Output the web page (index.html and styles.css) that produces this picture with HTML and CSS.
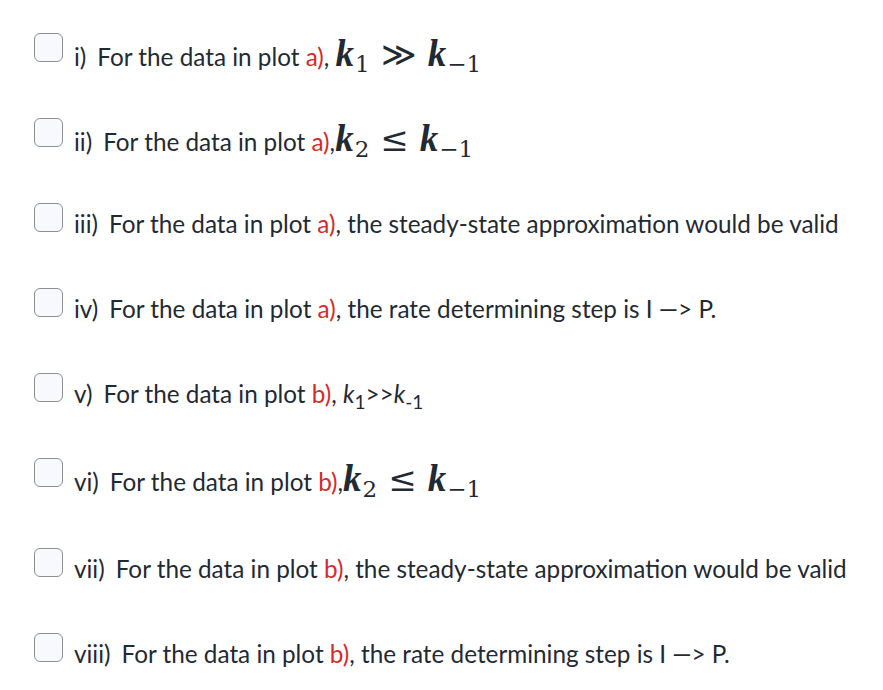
FILE: index.html
```html
<!DOCTYPE html>
<html>
<head>
<meta charset="utf-8">
<link rel="stylesheet" href="styles.css">
</head>
<body>
<div class="list">
  <div class="row"><span class="box"></span><span class="txt"><span class="num">i)</span>For the data in plot <span class="red">a)</span>, <span class="math"><i>k</i><sub>1</sub><span class="op">≫</span><i>k</i><sub>−1</sub></span></span></div>
  <div class="row"><span class="box"></span><span class="txt"><span class="num">ii)</span>For the data in plot <span class="red">a)</span>,<span class="math"><i>k</i><sub>2</sub><span class="op">≤</span><i>k</i><sub>−1</sub></span></span></div>
  <div class="row"><span class="box"></span><span class="txt"><span class="num">iii)</span>For the data in plot <span class="red">a)</span>, the steady-state approximation would be valid</span></div>
  <div class="row"><span class="box"></span><span class="txt"><span class="num">iv)</span>For the data in plot <span class="red">a)</span>, the rate determining step is I —&gt; P.</span></div>
  <div class="row"><span class="box"></span><span class="txt"><span class="num">v)</span>For the data in plot <span class="red">b)</span>, <span class="lk">k<sub>1</sub></span>&gt;&gt;<span class="lk">k<sub>-1</sub></span></span></div>
  <div class="row tall"><span class="box"></span><span class="txt"><span class="num">vi)</span>For the data in plot <span class="red">b)</span>,<span class="math"><i>k</i><sub>2</sub><span class="op">≤</span><i>k</i><sub>−1</sub></span></span></div>
  <div class="row"><span class="box"></span><span class="txt"><span class="num">vii)</span>For the data in plot <span class="red">b)</span>, the steady-state approximation would be valid</span></div>
  <div class="row"><span class="box"></span><span class="txt"><span class="num">viii)</span>For the data in plot <span class="red">b)</span>, the rate determining step is I —&gt; P.</span></div>
</div>
</body>
</html>
```
FILE: styles.css
```css
html, body {
  margin: 0;
  padding: 0;
  background: #ffffff;
}
body {
  font-family: Lato, "Open Sans", sans-serif;
  color: #1f2a33;
}
.list {
  display: flex;
  flex-direction: column;
  padding-top: 33px;
  padding-left: 34px;
}
.row {
  display: flex;
  align-items: flex-start;
  height: 85px;
}
.row.tall {
  height: 90px;
}
.box {
  flex: none;
  width: 27px;
  height: 27px;
  border: 1.5px solid #8a8f96;
  border-radius: 6px;
  background: #f7f9fc;
  margin-right: 11px;
}
.txt {
  font-size: 24.3px;
  line-height: 30px;
  margin-top: 6px;
  white-space: nowrap;
}
.num {
  margin-right: 11px;
}
.red {
  color: #d42a2a;
}
.math {
  font-family: "Liberation Serif", "DejaVu Serif", serif;
  font-size: 37px;
  line-height: 30px;
}
.math i {
  font-weight: bold;
  font-style: italic;
}
.math sub {
  font-family: "DejaVu Serif", serif;
  font-size: 23px;
  font-weight: normal;
  font-style: normal;
  vertical-align: -6px;
  line-height: 0;
  margin-left: 1px;
}
.op {
  font-family: "DejaVu Serif", serif;
  font-weight: normal;
  font-size: 34px;
  padding: 0 11px;
}
.lk {
  font-style: italic;
}
.lk sub {
  font-style: normal;
  font-size: 19px;
  vertical-align: -6px;
  line-height: 0;
}
```
